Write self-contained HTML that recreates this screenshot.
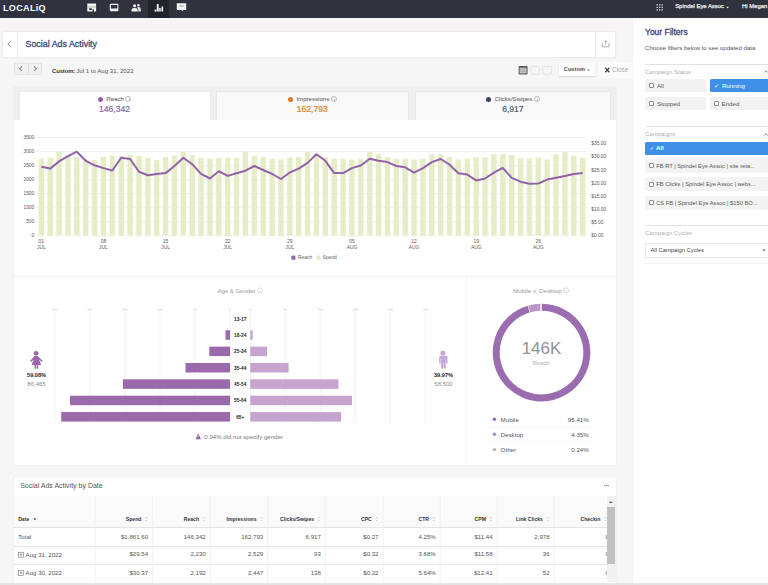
<!DOCTYPE html>
<html><head><meta charset="utf-8">
<style>
*{margin:0;padding:0;box-sizing:border-box}
html,body{width:768px;height:585px;overflow:hidden;background:#f6f6f6;font-family:"Liberation Sans",sans-serif;color:#333}
.a{position:absolute}
#hdr{left:0;top:0;width:768px;height:18px;background:#30333e}
#strip{left:0;top:18px;width:633px;height:13px;background:#f6f4f4}
#logo{left:3px;top:3px;font-size:9px;font-weight:bold;color:#fff;letter-spacing:0.35px}
.nav{top:0;height:18px;width:23px}
.nav.act{background:#22242c}
.ic{fill:#fff}
.hr{color:#ececec;font-size:5.9px;top:3.4px;-webkit-text-stroke:0.25px #ececec}
#titlecard{left:2px;top:31px;width:614px;height:26.5px;background:#fff;border:0.8px solid #ececec;box-shadow:0 0 1.5px rgba(0,0,0,0.06)}
#title{left:25.5px;top:38.8px;font-size:8.9px;color:#45477a;-webkit-text-stroke:0.3px #45477a}
.sep{background:#ececec}
.btn{background:#f0f0f0;border:0.8px solid #e4e4e4}
.sm{font-size:6px;color:#444}
#card{left:13.5px;top:87px;width:602.5px;height:378px;background:#fff;box-shadow:0 0 2px rgba(0,0,0,0.07)}
#tabs{left:13.5px;top:87px;width:602.5px;height:33px;background:#efefef}
.tab{top:91.3px;height:28.7px;background:#f9f9f9;border:0.8px solid #e8e8e8;border-bottom:none;border-radius:1.5px 1.5px 0 0}
.tab.act{background:#fff;border-color:#e9e9e9}
.tl{font-size:6.1px;color:#707070;top:3.1px;-webkit-text-stroke:0.1px #707070;width:100%;text-align:center}
.tv{font-size:8.6px;top:11.4px;-webkit-text-stroke:0.2px;width:100%;text-align:center}
.dot{display:inline-block;width:5.1px;height:5.1px;border-radius:50%;vertical-align:-0.4px;margin-right:3.4px}
.info{display:inline-block;width:5.8px;height:5.8px;border:0.6px solid #bbb;border-radius:50%;vertical-align:-0.8px;margin-left:1.6px;position:relative}.info:after{content:"";position:absolute;left:2.2px;top:1.8px;width:0.6px;height:2.2px;background:#bbb}
svg text{font-family:"Liberation Sans",sans-serif}
#wrap{position:absolute;left:0;top:0;width:768px;height:585px;overflow:hidden}
.ax{font-size:4.9px;fill:#5a5a5a}
.tk{font-size:3.2px;fill:#ccc}
.agl{font-size:4.8px;fill:#222;font-weight:bold}
#filters{left:633px;top:18px;width:135px;height:567px;background:#fff;box-shadow:-1px 0 1.5px rgba(0,0,0,0.03)}
.ft{font-size:6px;color:#b0b0b0}
.fb{background:#f2f2f2;height:13.4px;font-size:6.2px;color:#555;line-height:13.4px;padding-left:4px;border-radius:1.5px}
.fb.on{background:#3f8fe8;color:#fff}
.cb{display:inline-block;width:5.2px;height:5.2px;border:0.6px solid #8a8a8a;border-radius:1px;background:#fff;vertical-align:-0.6px;margin-right:2.8px}
.frow{background:#f3f3f3;height:14px;font-size:5.75px;color:#555;line-height:14px;padding-left:4px;white-space:nowrap;overflow:hidden;border-radius:1.5px}
.leg{font-size:5.5px;color:#555}
table{border-collapse:collapse}
.th{font-size:4.8px;font-weight:bold;color:#333}
.td{font-size:5.4px;color:#555}
.th2{font-size:5.1px;font-weight:bold;fill:#333}.td2{font-size:6.1px;fill:#555}
</style></head><body><div id="wrap">
<!-- header -->
<div class="a" id="hdr"></div>
<div class="a" id="strip"></div>
<div class="a" id="logo">LOCALiQ</div>
<div class="a nav act" style="left:147.9px;width:21.3px"></div>
<svg class="a" style="left:0;top:0" width="768" height="18">
  <!-- store icon -->
  <path d="M87.3,3.4 h8.8 v8.1 h-2.2 v-2.2 h-1.3 v2.2 h-5.3z" fill="#f2f2f2"/>
  <rect x="87.3" y="6.6" width="8.8" height="0.7" fill="#9a9ca4"/>
  <rect x="89.2" y="8.3" width="2.6" height="1.7" fill="#30333e"/>
  <!-- inbox/monitor -->
  <path d="M110.8,3.7 h6.6 a1,1 0 0 1 1,1 v5.6 a1,1 0 0 1 -1,1 h-6.6 a1,1 0 0 1 -1,-1 v-5.6 a1,1 0 0 1 1,-1z M111,4.9 v3.6 h6.4 v-3.6z" fill="#f2f2f2" fill-rule="evenodd"/>
  <!-- people -->
  <circle cx="138.4" cy="5.3" r="1.25" fill="#e8e8e8"/>
  <path d="M136.6,11.5 v-2.6 q0,-1.8 1.8,-1.8 q2.3,0 2.3,2.2 v2.2z" fill="#e8e8e8"/>
  <circle cx="134.6" cy="5.8" r="1.9" fill="#30333e"/>
  <path d="M130.9,11.9 v-2 q0,-2.4 3.7,-2.4 q3.7,0 3.7,2.4 v2z" fill="#30333e"/>
  <circle cx="134.6" cy="5.8" r="1.5" fill="#f4f4f4"/>
  <path d="M131.5,11.5 v-1.6 q0,-2 3.1,-2 q3.1,0 3.1,2 v1.6z" fill="#f4f4f4"/>
  <!-- chart -->
  <g fill="#fff">
    <rect x="154.6" y="9.6" width="1.8" height="1.9"/>
    <rect x="156.8" y="4.1" width="1.8" height="7.4"/>
    <rect x="159.2" y="8" width="1.5" height="3.5"/>
    <rect x="161.5" y="6.5" width="1.6" height="5"/>
  </g>
  <!-- comment -->
  <path d="M176.8,3.3 h9.4 v6.7 h-3.2 l-0.8,1.2 l-0.8,-1.2 h-4.6z" fill="#f4f4f4"/>
  <rect x="179.2" y="5.3" width="4.6" height="1.2" fill="#a8a8a8"/>
  <!-- grid icon -->
  <g fill="#cfcfcf">
    <rect x="656.5" y="4.2" width="1.4" height="1.4"/><rect x="659" y="4.2" width="1.4" height="1.4"/><rect x="661.5" y="4.2" width="1.4" height="1.4"/>
    <rect x="656.5" y="6.7" width="1.4" height="1.4"/><rect x="659" y="6.7" width="1.4" height="1.4"/><rect x="661.5" y="6.7" width="1.4" height="1.4"/>
    <rect x="656.5" y="9.2" width="1.4" height="1.4"/><rect x="659" y="9.2" width="1.4" height="1.4"/><rect x="661.5" y="9.2" width="1.4" height="1.4"/>
  </g>
  <path d="M726.2,6.8 h2.8 l-1.4,1.5z" fill="#fff"/>
</svg>
<div class="a hr" style="left:675.2px">Spindel Eye Assoc</div>
<div class="a hr" style="left:742px">Hi Megan</div>

<!-- title card -->
<div class="a" id="titlecard"></div>
<div class="a sep" style="left:17px;top:32px;width:1px;height:25px"></div>
<div class="a sep" style="left:595px;top:32px;width:0.8px;height:25px"></div>
<svg class="a" style="left:0;top:0" width="620" height="60">
  <path d="M11.2,40.6 l-3.4,3.3 l3.4,3.3" fill="none" stroke="#888" stroke-width="1"/>
  <path d="M602.4,42.8 v4 h6.6 v-4 M605.7,45.2 v-4.6 M604.1,42.2 l1.6,-1.6 l1.6,1.6" fill="none" stroke="#9a9a9a" stroke-width="0.8"/>
</svg>
<div class="a" id="title">Social Ads Activity</div>

<!-- date nav -->
<div class="a btn" style="left:14.2px;top:63px;width:27.8px;height:12.4px"></div>
<div class="a" style="left:28.2px;top:63.5px;width:0.8px;height:11.4px;background:#dedede"></div>
<svg class="a" style="left:0;top:60px" width="60" height="20">
  <path d="M21.9,6.5 l-2.3,2.2 l2.3,2.2 M34.1,6.5 l2.3,2.2 l-2.3,2.2" fill="none" stroke="#8a8a8a" stroke-width="1.1"/>
</svg>
<div class="a sm" style="left:52px;top:66.8px;font-size:5.8px;color:#555"><b style="color:#333;letter-spacing:-0.05px">Custom:</b><span style="font-size:6.1px;margin-left:1.1px">Jul 1 to Aug 31, 2022</span></div>

<svg class="a" style="left:510px;top:60px" width="50" height="20">
  <rect x="8.6" y="6" width="9" height="8.4" rx="0.8" fill="#5a5a5a"/>
  <rect x="9.6" y="7.8" width="7" height="5.6" fill="#c4c4c4"/>
  <path d="M9.6,9.6 h7 M9.6,11.5 h7 M11.9,7.8 v5.6 M14.3,7.8 v5.6" stroke="#9a9a9a" stroke-width="0.4"/>
  <rect x="20.8" y="6.5" width="8.6" height="7.6" rx="0.6" fill="#f6f6f6" stroke="#e0e0e0" stroke-width="0.8"/>
  <rect x="32.8" y="6.5" width="8.6" height="7.6" rx="0.6" fill="#f6f6f6" stroke="#e0e0e0" stroke-width="0.8"/>
</svg>
<div class="a" style="left:559.4px;top:63.3px;width:35.7px;height:12.9px;background:#fff;box-shadow:0 0.6px 1.2px rgba(0,0,0,0.13)"></div>
<div class="a" style="left:563.8px;top:66.3px;font-size:5.6px;font-weight:bold;color:#4a4a4a;letter-spacing:0.05px">Custom</div>
<svg class="a" style="left:585px;top:67px" width="6" height="6"><path d="M2.2,2.6 h2.8 l-1.4,1.4z" fill="#666"/></svg>
<div class="a" style="left:599px;top:62px;width:34px;height:16px;background:#fcfcfc"></div>
<svg class="a" style="left:603px;top:66px" width="8" height="8"><path d="M2.3,1.8 l4,4.4 M6.3,1.8 l-4,4.4" stroke="#444" stroke-width="1.3"/></svg>
<div class="a" style="left:612px;top:66.3px;font-size:6.4px;color:#aaa">Close</div>

<!-- card -->
<div class="a" id="card"></div>
<div class="a" id="tabs"></div>
<div class="a tab act" style="left:18.5px;width:192px"><div class="a tl"><span class="dot" style="background:#9460a8"></span>Reach<span class="info"></span></div><div class="a tv" style="color:#8e5ea6">146,342</div></div>
<div class="a tab" style="left:216px;width:192.6px"><div class="a tl"><span class="dot" style="background:#e07b2c"></span>Impressions<span class="info"></span></div><div class="a tv" style="color:#e0812e">162,793</div></div>
<div class="a tab" style="left:414.8px;width:196.2px"><div class="a tl"><span class="dot" style="background:#3a3f6a"></span>Clicks/Swipes<span class="info"></span></div><div class="a tv" style="color:#555a6a">6,917</div></div>

<svg class="a" style="left:0;top:0" width="640" height="470">
<line x1="36" x2="587" y1="235.70" y2="235.70" stroke="#ececec" stroke-width="0.7"/>
<text x="34.3" y="237.45" text-anchor="end" class="ax">0</text>
<text x="591.2" y="237.05" class="ax">$0.00</text>
<line x1="36" x2="587" y1="221.67" y2="221.67" stroke="#ececec" stroke-width="0.7"/>
<text x="34.3" y="223.42" text-anchor="end" class="ax">500</text>
<text x="591.2" y="223.95" class="ax">$5.00</text>
<line x1="36" x2="587" y1="207.64" y2="207.64" stroke="#ececec" stroke-width="0.7"/>
<text x="34.3" y="209.39" text-anchor="end" class="ax">1000</text>
<text x="591.2" y="210.85" class="ax">$10.00</text>
<line x1="36" x2="587" y1="193.61" y2="193.61" stroke="#ececec" stroke-width="0.7"/>
<text x="34.3" y="195.36" text-anchor="end" class="ax">1500</text>
<text x="591.2" y="197.75" class="ax">$15.00</text>
<line x1="36" x2="587" y1="179.59" y2="179.59" stroke="#ececec" stroke-width="0.7"/>
<text x="34.3" y="181.34" text-anchor="end" class="ax">2000</text>
<text x="591.2" y="184.65" class="ax">$20.00</text>
<line x1="36" x2="587" y1="165.56" y2="165.56" stroke="#ececec" stroke-width="0.7"/>
<text x="34.3" y="167.31" text-anchor="end" class="ax">2500</text>
<text x="591.2" y="171.55" class="ax">$25.00</text>
<line x1="36" x2="587" y1="151.53" y2="151.53" stroke="#ececec" stroke-width="0.7"/>
<text x="34.3" y="153.28" text-anchor="end" class="ax">3000</text>
<text x="591.2" y="158.45" class="ax">$30.00</text>
<line x1="36" x2="587" y1="137.50" y2="137.50" stroke="#ececec" stroke-width="0.7"/>
<text x="34.3" y="139.25" text-anchor="end" class="ax">3500</text>
<text x="591.2" y="145.35" class="ax">$35.00</text>
<rect x="38.65" y="158.75" width="5.4" height="76.95" fill="#e6ecc6"/>
<rect x="47.52" y="157.70" width="5.4" height="78.00" fill="#e6ecc6"/>
<rect x="56.40" y="151.70" width="5.4" height="84.00" fill="#e6ecc6"/>
<rect x="65.27" y="155.60" width="5.4" height="80.10" fill="#e6ecc6"/>
<rect x="74.15" y="157.00" width="5.4" height="78.70" fill="#e6ecc6"/>
<rect x="83.02" y="159.50" width="5.4" height="76.20" fill="#e6ecc6"/>
<rect x="91.89" y="160.00" width="5.4" height="75.70" fill="#e6ecc6"/>
<rect x="100.77" y="157.00" width="5.4" height="78.70" fill="#e6ecc6"/>
<rect x="109.64" y="155.60" width="5.4" height="80.10" fill="#e6ecc6"/>
<rect x="118.52" y="156.00" width="5.4" height="79.70" fill="#e6ecc6"/>
<rect x="127.39" y="154.80" width="5.4" height="80.90" fill="#e6ecc6"/>
<rect x="136.26" y="156.00" width="5.4" height="79.70" fill="#e6ecc6"/>
<rect x="145.14" y="158.00" width="5.4" height="77.70" fill="#e6ecc6"/>
<rect x="154.01" y="160.00" width="5.4" height="75.70" fill="#e6ecc6"/>
<rect x="162.89" y="157.00" width="5.4" height="78.70" fill="#e6ecc6"/>
<rect x="171.76" y="155.60" width="5.4" height="80.10" fill="#e6ecc6"/>
<rect x="180.63" y="151.70" width="5.4" height="84.00" fill="#e6ecc6"/>
<rect x="189.51" y="155.00" width="5.4" height="80.70" fill="#e6ecc6"/>
<rect x="198.38" y="157.70" width="5.4" height="78.00" fill="#e6ecc6"/>
<rect x="207.26" y="158.75" width="5.4" height="76.95" fill="#e6ecc6"/>
<rect x="216.13" y="158.00" width="5.4" height="77.70" fill="#e6ecc6"/>
<rect x="225.00" y="157.70" width="5.4" height="78.00" fill="#e6ecc6"/>
<rect x="233.88" y="157.70" width="5.4" height="78.00" fill="#e6ecc6"/>
<rect x="242.75" y="151.70" width="5.4" height="84.00" fill="#e6ecc6"/>
<rect x="251.63" y="156.00" width="5.4" height="79.70" fill="#e6ecc6"/>
<rect x="260.50" y="157.00" width="5.4" height="78.70" fill="#e6ecc6"/>
<rect x="269.37" y="158.75" width="5.4" height="76.95" fill="#e6ecc6"/>
<rect x="278.25" y="159.50" width="5.4" height="76.20" fill="#e6ecc6"/>
<rect x="287.12" y="157.70" width="5.4" height="78.00" fill="#e6ecc6"/>
<rect x="296.00" y="157.00" width="5.4" height="78.70" fill="#e6ecc6"/>
<rect x="304.87" y="152.20" width="5.4" height="83.50" fill="#e6ecc6"/>
<rect x="313.74" y="154.30" width="5.4" height="81.40" fill="#e6ecc6"/>
<rect x="322.62" y="157.00" width="5.4" height="78.70" fill="#e6ecc6"/>
<rect x="331.49" y="158.75" width="5.4" height="76.95" fill="#e6ecc6"/>
<rect x="340.37" y="158.75" width="5.4" height="76.95" fill="#e6ecc6"/>
<rect x="349.24" y="159.50" width="5.4" height="76.20" fill="#e6ecc6"/>
<rect x="358.11" y="158.75" width="5.4" height="76.95" fill="#e6ecc6"/>
<rect x="366.99" y="151.70" width="5.4" height="84.00" fill="#e6ecc6"/>
<rect x="375.86" y="154.30" width="5.4" height="81.40" fill="#e6ecc6"/>
<rect x="384.74" y="157.00" width="5.4" height="78.70" fill="#e6ecc6"/>
<rect x="393.61" y="158.75" width="5.4" height="76.95" fill="#e6ecc6"/>
<rect x="402.48" y="158.75" width="5.4" height="76.95" fill="#e6ecc6"/>
<rect x="411.36" y="159.50" width="5.4" height="76.20" fill="#e6ecc6"/>
<rect x="420.23" y="158.75" width="5.4" height="76.95" fill="#e6ecc6"/>
<rect x="429.11" y="154.30" width="5.4" height="81.40" fill="#e6ecc6"/>
<rect x="437.98" y="154.30" width="5.4" height="81.40" fill="#e6ecc6"/>
<rect x="446.85" y="157.00" width="5.4" height="78.70" fill="#e6ecc6"/>
<rect x="455.73" y="159.50" width="5.4" height="76.20" fill="#e6ecc6"/>
<rect x="464.60" y="158.75" width="5.4" height="76.95" fill="#e6ecc6"/>
<rect x="473.48" y="157.50" width="5.4" height="78.20" fill="#e6ecc6"/>
<rect x="482.35" y="157.50" width="5.4" height="78.20" fill="#e6ecc6"/>
<rect x="491.22" y="154.30" width="5.4" height="81.40" fill="#e6ecc6"/>
<rect x="500.10" y="154.30" width="5.4" height="81.40" fill="#e6ecc6"/>
<rect x="508.97" y="155.00" width="5.4" height="80.70" fill="#e6ecc6"/>
<rect x="517.85" y="158.20" width="5.4" height="77.50" fill="#e6ecc6"/>
<rect x="526.72" y="158.75" width="5.4" height="76.95" fill="#e6ecc6"/>
<rect x="535.59" y="157.70" width="5.4" height="78.00" fill="#e6ecc6"/>
<rect x="544.47" y="159.50" width="5.4" height="76.20" fill="#e6ecc6"/>
<rect x="553.34" y="154.30" width="5.4" height="81.40" fill="#e6ecc6"/>
<rect x="562.22" y="152.20" width="5.4" height="83.50" fill="#e6ecc6"/>
<rect x="571.09" y="156.00" width="5.4" height="79.70" fill="#e6ecc6"/>
<rect x="579.96" y="157.70" width="5.4" height="78.00" fill="#e6ecc6"/>
<polyline points="41.35,166.80 50.22,168.60 59.10,161.40 67.97,156.10 76.85,151.70 85.72,160.80 94.59,165.30 103.47,168.10 112.34,170.50 121.22,157.70 130.09,159.00 138.96,171.80 147.84,175.20 156.71,173.90 165.59,173.10 174.46,166.00 183.33,157.70 192.21,164.20 201.08,173.90 209.96,178.50 218.83,171.25 227.70,175.90 236.58,173.30 245.45,170.70 254.33,166.00 263.20,170.00 272.07,173.90 280.95,179.00 289.82,172.50 298.70,168.60 307.57,162.90 316.44,154.30 325.32,160.80 334.19,173.10 343.07,173.10 351.94,168.10 360.81,165.50 369.69,158.75 378.56,160.80 387.44,162.10 396.31,166.00 405.18,167.30 414.06,172.55 422.93,168.10 431.81,162.10 440.68,159.00 449.55,164.70 458.43,173.30 467.30,174.60 476.18,180.40 485.05,178.50 493.92,172.55 502.80,167.90 511.67,177.80 520.55,181.70 529.42,183.75 538.29,183.50 547.17,179.60 556.04,177.80 564.92,175.90 573.79,173.90 582.66,173.10" fill="none" stroke="#9163a8" stroke-width="2" stroke-linejoin="round"/>
<text x="41.35" y="243" text-anchor="middle" class="ax">01</text>
<text x="41.35" y="249" text-anchor="middle" class="ax">JUL</text>
<text x="103.47" y="243" text-anchor="middle" class="ax">08</text>
<text x="103.47" y="249" text-anchor="middle" class="ax">JUL</text>
<text x="165.59" y="243" text-anchor="middle" class="ax">15</text>
<text x="165.59" y="249" text-anchor="middle" class="ax">JUL</text>
<text x="227.70" y="243" text-anchor="middle" class="ax">22</text>
<text x="227.70" y="249" text-anchor="middle" class="ax">JUL</text>
<text x="289.82" y="243" text-anchor="middle" class="ax">29</text>
<text x="289.82" y="249" text-anchor="middle" class="ax">JUL</text>
<text x="351.94" y="243" text-anchor="middle" class="ax">05</text>
<text x="351.94" y="249" text-anchor="middle" class="ax">AUG</text>
<text x="414.06" y="243" text-anchor="middle" class="ax">12</text>
<text x="414.06" y="249" text-anchor="middle" class="ax">AUG</text>
<text x="476.18" y="243" text-anchor="middle" class="ax">19</text>
<text x="476.18" y="249" text-anchor="middle" class="ax">AUG</text>
<text x="538.29" y="243" text-anchor="middle" class="ax">26</text>
<text x="538.29" y="249" text-anchor="middle" class="ax">AUG</text>
<rect x="291.4" y="255.7" width="4" height="4" fill="#9163a8"/><text x="298" y="259.3" class="ax">Reach</text>
<rect x="316.5" y="255.7" width="4" height="4" fill="#e4ebc3"/><text x="322.7" y="259.3" class="ax">Spend</text>
<line x1="13.5" x2="616" y1="276.5" y2="276.5" stroke="#efefef" stroke-width="0.8"/>
<line x1="466.5" x2="466.5" y1="276.5" y2="465" stroke="#f2f2f2" stroke-width="0.8"/>
<line x1="54.8" x2="54.8" y1="312" y2="423" stroke="#eeeeee" stroke-width="0.8"/>
<text x="54.8" y="311" text-anchor="middle" class="tk">250</text>
<line x1="89.9" x2="89.9" y1="312" y2="423" stroke="#eeeeee" stroke-width="0.8"/>
<text x="89.9" y="311" text-anchor="middle" class="tk">200</text>
<line x1="125" x2="125" y1="312" y2="423" stroke="#eeeeee" stroke-width="0.8"/>
<text x="125" y="311" text-anchor="middle" class="tk">150</text>
<line x1="160" x2="160" y1="312" y2="423" stroke="#eeeeee" stroke-width="0.8"/>
<text x="160" y="311" text-anchor="middle" class="tk">100</text>
<line x1="195" x2="195" y1="312" y2="423" stroke="#eeeeee" stroke-width="0.8"/>
<text x="195" y="311" text-anchor="middle" class="tk">50</text>
<line x1="230" x2="230" y1="312" y2="423" stroke="#eeeeee" stroke-width="0.8"/>
<text x="230" y="311" text-anchor="middle" class="tk">0</text>
<line x1="250.3" x2="250.3" y1="312" y2="423" stroke="#eeeeee" stroke-width="0.8"/>
<text x="250.3" y="311" text-anchor="middle" class="tk">0</text>
<line x1="285.3" x2="285.3" y1="312" y2="423" stroke="#eeeeee" stroke-width="0.8"/>
<text x="285.3" y="311" text-anchor="middle" class="tk">50</text>
<line x1="320.3" x2="320.3" y1="312" y2="423" stroke="#eeeeee" stroke-width="0.8"/>
<text x="320.3" y="311" text-anchor="middle" class="tk">100</text>
<line x1="355.3" x2="355.3" y1="312" y2="423" stroke="#eeeeee" stroke-width="0.8"/>
<text x="355.3" y="311" text-anchor="middle" class="tk">150</text>
<line x1="390.3" x2="390.3" y1="312" y2="423" stroke="#eeeeee" stroke-width="0.8"/>
<text x="390.3" y="311" text-anchor="middle" class="tk">200</text>
<line x1="425.3" x2="425.3" y1="312" y2="423" stroke="#eeeeee" stroke-width="0.8"/>
<text x="425.3" y="311" text-anchor="middle" class="tk">250</text>
<text x="240.2" y="320.60" text-anchor="middle" class="agl">13-17</text>
<rect x="225.5" y="330.26" width="4.50" height="9.5" fill="#9b6aab"/>
<rect x="250.3" y="330.26" width="2.40" height="9.5" fill="#c5a5cf"/>
<text x="240.2" y="336.96" text-anchor="middle" class="agl">18-24</text>
<rect x="209.3" y="346.62" width="20.70" height="9.5" fill="#9b6aab"/>
<rect x="250.3" y="346.62" width="16.70" height="9.5" fill="#c5a5cf"/>
<text x="240.2" y="353.32" text-anchor="middle" class="agl">25-34</text>
<rect x="185.5" y="362.98" width="44.50" height="9.5" fill="#9b6aab"/>
<rect x="250.3" y="362.98" width="38.30" height="9.5" fill="#c5a5cf"/>
<text x="240.2" y="369.68" text-anchor="middle" class="agl">35-44</text>
<rect x="122.9" y="379.34" width="107.10" height="9.5" fill="#9b6aab"/>
<rect x="250.3" y="379.34" width="88.20" height="9.5" fill="#c5a5cf"/>
<text x="240.2" y="386.04" text-anchor="middle" class="agl">45-54</text>
<rect x="70" y="395.70" width="160.00" height="9.5" fill="#9b6aab"/>
<rect x="250.3" y="395.70" width="101.70" height="9.5" fill="#c5a5cf"/>
<text x="240.2" y="402.40" text-anchor="middle" class="agl">55-64</text>
<rect x="61.25" y="412.06" width="168.75" height="9.5" fill="#9b6aab"/>
<rect x="250.3" y="412.06" width="90.70" height="9.5" fill="#c5a5cf"/>
<text x="240.2" y="418.76" text-anchor="middle" class="agl">65+</text>
<path d="M541.97,307.30 A45.3,45.3 0 1 1 528.63,309.17" fill="none" stroke="#9c6cb0" stroke-width="7"/>
<path d="M529.17,309.01 A45.3,45.3 0 0 1 540.24,307.32" fill="none" stroke="#bd97c9" stroke-width="7"/>
<path d="M540.71,307.31 A45.3,45.3 0 0 1 541.34,307.30" fill="none" stroke="#c9acd3" stroke-width="7"/>
<line x1="490" x2="591.5" y1="427.3" y2="427.3" stroke="#eee" stroke-width="0.6"/>
<line x1="490" x2="591.5" y1="442.1" y2="442.1" stroke="#eee" stroke-width="0.6"/>
<circle cx="494.4" cy="419.3" r="1.7" fill="#9a68ab"/>
<circle cx="494.4" cy="434.3" r="1.7" fill="#a886b8"/>
<circle cx="494.4" cy="449.6" r="1.7" fill="#c0a8cc"/>
<text x="500.6" y="421.5" style="font-size:6.2px;fill:#555">Mobile</text>
<text x="588.8" y="421.5" text-anchor="end" style="font-size:6.2px;fill:#555">95.41%</text>
<text x="500.6" y="436.5" style="font-size:6.2px;fill:#555">Desktop</text>
<text x="588.8" y="436.5" text-anchor="end" style="font-size:6.2px;fill:#555">4.35%</text>
<text x="500.6" y="451.9" style="font-size:6.2px;fill:#555">Other</text>
<text x="588.8" y="451.9" text-anchor="end" style="font-size:6.2px;fill:#555">0.24%</text>
<text x="541.5" y="353.6" text-anchor="middle" style="font-size:17px;fill:#939393">146K</text>
<text x="541.2" y="365" text-anchor="middle" style="font-size:5.8px;fill:#b0b0b0">Reach</text>
<text x="513" y="292.6" style="font-size:6.2px;fill:#999">Mobile v. Desktop</text>
<circle cx="566.1" cy="290.5" r="2.6" fill="none" stroke="#bbb" stroke-width="0.5"/><path d="M566.1,289.8 v2.2" stroke="#bbb" stroke-width="0.5"/>
<text x="236.4" y="292.6" text-anchor="middle" style="font-size:6px;fill:#999">Age &amp; Gender</text>
<circle cx="260" cy="290.5" r="2.6" fill="none" stroke="#bbb" stroke-width="0.5"/><path d="M260,289.8 v2.2" stroke="#bbb" stroke-width="0.5"/>
<!-- female icon -->
<g fill="#9b66ae">
  <circle cx="36.1" cy="353.3" r="2.4"/>
  <path d="M34.5,356.1 h3.2 l5.1,5 l-0.9,1 l-2.9,-2.6 l2.3,5.4 h-3.1 v3.8 h-1.5 v-3.8 h-0.6 v3.8 h-1.5 v-3.8 h-3.1 l2.3,-5.4 l-2.9,2.6 l-0.9,-1z"/>
</g>
<text x="36.6" y="377.1" text-anchor="middle" style="font-size:5.6px;font-weight:bold;fill:#222">59.08%</text>
<text x="36.5" y="385.9" text-anchor="middle" style="font-size:6px;fill:#8a8a8a">86,465</text>
<!-- male icon -->
<g fill="#c6a5d6">
  <circle cx="442.9" cy="353.2" r="2.5"/>
  <path d="M439.6,356 h6.6 a1.4,1.4 0 0 1 1.4,1.4 v6.2 h-1.5 v-5.2 h-0.4 v10.2 h-2.05 v-5.8 h-0.5 v5.8 h-2.05 v-10.2 h-0.4 v5.2 h-1.5 v-6.2 a1.4,1.4 0 0 1 1.4,-1.4z"/>
</g>
<text x="443.5" y="377.1" text-anchor="middle" style="font-size:5.6px;font-weight:bold;fill:#222">39.97%</text>
<text x="443.5" y="385.9" text-anchor="middle" style="font-size:6px;fill:#8a8a8a">58,500</text>
<!-- warning -->
<path d="M198.25,433.6 l2.7,5.7 h-5.4z" fill="#8a62a0"/>
<path d="M198.25,435.6 v1.8" stroke="#e6dcec" stroke-width="0.6"/>
<text x="204.3" y="439.3" style="font-size:6.1px;fill:#777">0.94% did not specify gender</text>
</svg>

<!-- table card -->
<div class="a" style="left:13.5px;top:477px;width:602.5px;height:108px;background:#fff;box-shadow:0 0 2px rgba(0,0,0,0.07)"></div>
<div class="a" style="left:20.2px;top:481.8px;font-size:7px;color:#555">Social Ads Activity by Date</div>
<div class="a" style="left:603.6px;top:481.6px;font-size:6.4px;color:#666;font-weight:bold;letter-spacing:-0.3px">···</div>
<div class="a" style="left:13.5px;top:496px;width:593px;height:32.3px;background:#fafafa;border-bottom:1px solid #e4e4e4"></div>
<div class="a" style="left:13.5px;top:546px;width:593px;height:0.8px;background:#e8e8e8"></div>
<div class="a" style="left:13.5px;top:564.2px;width:593px;height:0.8px;background:#e8e8e8"></div>
<div id="cols"></div>
<svg class="a" style="left:0;top:490px" width="620" height="95">
  <line x1="95" x2="95" y1="6" y2="95" stroke="#ececec" stroke-width="0.8"/>
<line x1="152.6" x2="152.6" y1="6" y2="95" stroke="#ececec" stroke-width="0.8"/>
<line x1="210.2" x2="210.2" y1="6" y2="95" stroke="#ececec" stroke-width="0.8"/>
<line x1="267.7" x2="267.7" y1="6" y2="95" stroke="#ececec" stroke-width="0.8"/>
<line x1="325.3" x2="325.3" y1="6" y2="95" stroke="#ececec" stroke-width="0.8"/>
<line x1="383" x2="383" y1="6" y2="95" stroke="#ececec" stroke-width="0.8"/>
<line x1="440.2" x2="440.2" y1="6" y2="95" stroke="#ececec" stroke-width="0.8"/>
<line x1="497.1" x2="497.1" y1="6" y2="95" stroke="#ececec" stroke-width="0.8"/>
<line x1="554.1" x2="554.1" y1="6" y2="95" stroke="#ececec" stroke-width="0.8"/>
<text x="18.2" y="31" class="th2">Date</text><path d="M33.4,28.399999999999977 h3 l-1.5,1.8z" fill="#333"/>
<text x="141.4" y="31" text-anchor="end" class="th2">Spend</text>
<path d="M145.4,28.200000000000045 l0.9,-1 l0.9,1 M145.4,29.799999999999955 l0.9,1 l0.9,-1" fill="none" stroke="#999" stroke-width="0.45"/>
<text x="199.0" y="31" text-anchor="end" class="th2">Reach</text>
<path d="M203.0,28.200000000000045 l0.9,-1 l0.9,1 M203.0,29.799999999999955 l0.9,1 l0.9,-1" fill="none" stroke="#999" stroke-width="0.45"/>
<text x="256.5" y="31" text-anchor="end" class="th2">Impressions</text>
<path d="M260.5,28.200000000000045 l0.9,-1 l0.9,1 M260.5,29.799999999999955 l0.9,1 l0.9,-1" fill="none" stroke="#999" stroke-width="0.45"/>
<text x="314.1" y="31" text-anchor="end" class="th2">Clicks/Swipes</text>
<path d="M318.1,28.200000000000045 l0.9,-1 l0.9,1 M318.1,29.799999999999955 l0.9,1 l0.9,-1" fill="none" stroke="#999" stroke-width="0.45"/>
<text x="371.8" y="31" text-anchor="end" class="th2">CPC</text>
<path d="M375.8,28.200000000000045 l0.9,-1 l0.9,1 M375.8,29.799999999999955 l0.9,1 l0.9,-1" fill="none" stroke="#999" stroke-width="0.45"/>
<text x="429.0" y="31" text-anchor="end" class="th2">CTR</text>
<path d="M433.0,28.200000000000045 l0.9,-1 l0.9,1 M433.0,29.799999999999955 l0.9,1 l0.9,-1" fill="none" stroke="#999" stroke-width="0.45"/>
<text x="485.9" y="31" text-anchor="end" class="th2">CPM</text>
<path d="M489.9,28.200000000000045 l0.9,-1 l0.9,1 M489.9,29.799999999999955 l0.9,1 l0.9,-1" fill="none" stroke="#999" stroke-width="0.45"/>
<text x="542.9" y="31" text-anchor="end" class="th2">Link Clicks</text>
<path d="M546.9,28.200000000000045 l0.9,-1 l0.9,1 M546.9,29.799999999999955 l0.9,1 l0.9,-1" fill="none" stroke="#999" stroke-width="0.45"/>
<text x="600.3" y="31" text-anchor="end" class="th2">Checkin</text>
<path d="M604.3,28.200000000000045 l0.9,-1 l0.9,1 M604.3,29.799999999999955 l0.9,1 l0.9,-1" fill="none" stroke="#999" stroke-width="0.45"/>
<text x="18.3" y="48.700000000000045" class="td2">Total</text>
<rect x="18.5" y="62.2" width="5" height="5" fill="none" stroke="#666" stroke-width="0.55"/><path d="M21,63.2 v3 M19.5,64.7 h3" stroke="#666" stroke-width="0.55"/>
<text x="25.6" y="67.20000000000005" class="td2">Aug 31, 2022</text>
<rect x="18.5" y="80.3" width="5" height="5" fill="none" stroke="#666" stroke-width="0.55"/><path d="M21,81.3 v3 M19.5,82.8 h3" stroke="#666" stroke-width="0.55"/>
<text x="25.6" y="85.29999999999995" class="td2">Aug 30, 2022</text>
<text x="148.1" y="48.60000000000002" text-anchor="end" class="td2">$1,861.60</text>
<text x="205.7" y="48.60000000000002" text-anchor="end" class="td2">146,342</text>
<text x="263.2" y="48.60000000000002" text-anchor="end" class="td2">162,793</text>
<text x="320.8" y="48.60000000000002" text-anchor="end" class="td2">6,917</text>
<text x="378.5" y="48.60000000000002" text-anchor="end" class="td2">$0.27</text>
<text x="435.7" y="48.60000000000002" text-anchor="end" class="td2">4.25%</text>
<text x="492.6" y="48.60000000000002" text-anchor="end" class="td2">$11.44</text>
<text x="549.6" y="48.60000000000002" text-anchor="end" class="td2">2,978</text>
<text x="609.0" y="48.60000000000002" text-anchor="end" class="td2">0</text>
<text x="148.1" y="66.10000000000002" text-anchor="end" class="td2">$29.54</text>
<text x="205.7" y="66.10000000000002" text-anchor="end" class="td2">2,230</text>
<text x="263.2" y="66.10000000000002" text-anchor="end" class="td2">2,529</text>
<text x="320.8" y="66.10000000000002" text-anchor="end" class="td2">93</text>
<text x="378.5" y="66.10000000000002" text-anchor="end" class="td2">$0.32</text>
<text x="435.7" y="66.10000000000002" text-anchor="end" class="td2">3.68%</text>
<text x="492.6" y="66.10000000000002" text-anchor="end" class="td2">$11.58</text>
<text x="549.6" y="66.10000000000002" text-anchor="end" class="td2">36</text>
<text x="609.0" y="66.10000000000002" text-anchor="end" class="td2">0</text>
<text x="148.1" y="84.5" text-anchor="end" class="td2">$30.37</text>
<text x="205.7" y="84.5" text-anchor="end" class="td2">2,192</text>
<text x="263.2" y="84.5" text-anchor="end" class="td2">2,447</text>
<text x="320.8" y="84.5" text-anchor="end" class="td2">138</text>
<text x="378.5" y="84.5" text-anchor="end" class="td2">$0.22</text>
<text x="435.7" y="84.5" text-anchor="end" class="td2">5.64%</text>
<text x="492.6" y="84.5" text-anchor="end" class="td2">$12.41</text>
<text x="549.6" y="84.5" text-anchor="end" class="td2">52</text>
<text x="609.0" y="84.5" text-anchor="end" class="td2">0</text>
</svg>
<!-- scrollbar -->
<div class="a" style="left:606.8px;top:496px;width:9px;height:86px;background:#f1f1f1"></div>
<div class="a" style="left:607px;top:507px;width:8.2px;height:56.6px;background:#c1c1c1"></div>
<svg class="a" style="left:606px;top:498px" width="10" height="8"><path d="M2.8,5 l2,-2 l2,2z" fill="#666"/></svg>


<!-- filters -->
<div class="a" id="filters"></div>
<div class="a" style="left:645px;top:27.3px;font-size:8.5px;color:#45477a;-webkit-text-stroke:0.35px #45477a">Your Filters</div>
<div class="a" style="left:645px;top:43.7px;font-size:6.1px;color:#555">Choose filters below to see updated data</div>
<div class="a" style="left:645px;top:64.2px;width:123px;height:0.8px;background:#e2e2e2"></div>
<div class="a ft" style="left:645px;top:68.5px">Campaign Status</div>
<svg class="a" style="left:760px;top:67px" width="8" height="8"><path d="M4.6,5.4 l1.6,-1.6 l1.6,1.6" fill="none" stroke="#666" stroke-width="0.8"/></svg>
<div class="a fb" style="left:645px;top:78.9px;width:60.5px"><span class="cb"></span>All</div>
<div class="a fb on" style="left:709.5px;top:78.9px;width:60px;padding-left:4.8px"><span style="margin-right:2.6px;font-size:5.6px">✓</span>Running</div>
<div class="a fb" style="left:645px;top:96.7px;width:60.5px"><span class="cb"></span>Stopped</div>
<div class="a fb" style="left:709.5px;top:96.7px;width:58.5px"><span class="cb"></span>Ended</div>
<div class="a" style="left:645px;top:126.4px;width:123px;height:0.8px;background:#e2e2e2"></div>
<div class="a ft" style="left:645px;top:131px">Campaigns</div>
<svg class="a" style="left:760px;top:130px" width="8" height="8"><path d="M4.6,5.4 l1.6,-1.6 l1.6,1.6" fill="none" stroke="#666" stroke-width="0.8"/></svg>
<div class="a fb on" style="left:645px;top:141.5px;width:125px;height:13.7px;line-height:13.7px;padding-left:4.5px;font-weight:bold;font-size:5.8px"><span style="margin-right:2.6px;font-weight:normal;font-size:5.4px">✓</span>All</div>
<div class="a frow" style="left:645px;top:158.8px;width:123px"><span class="cb" style="margin-right:2px"></span>FB RT | Spindel Eye Assoc | site reta...</div>
<div class="a frow" style="left:645px;top:177.4px;width:123px"><span class="cb" style="margin-right:2px"></span>FB Clicks | Spindel Eye Assoc | webs...</div>
<div class="a frow" style="left:645px;top:195.7px;width:123px"><span class="cb" style="margin-right:2px"></span>CS FB | Spindel Eye Assoc | $150 BO...</div>
<div class="a" style="left:645px;top:224.8px;width:123px;height:0.8px;background:#e2e2e2"></div>
<div class="a ft" style="left:645px;top:230px">Campaign Cycles</div>
<div class="a" style="left:645px;top:243.3px;width:125px;height:14.8px;border:0.8px solid #e6e6e6;background:#fff"></div>
<div class="a" style="left:645px;top:262.8px;width:123px;height:0.7px;background:#f0f0f0"></div>
<div class="a" style="left:650.5px;top:247.3px;font-size:5.8px;color:#444">All Campaign Cycles</div>
<svg class="a" style="left:760px;top:246px" width="8" height="8"><path d="M2.4,3.6 h3.2 l-1.6,1.6z" fill="#555"/></svg>
<div class="a" style="left:0;top:583.3px;width:768px;height:1.7px;background:#e4e4e4"></div>
</div></body></html>
